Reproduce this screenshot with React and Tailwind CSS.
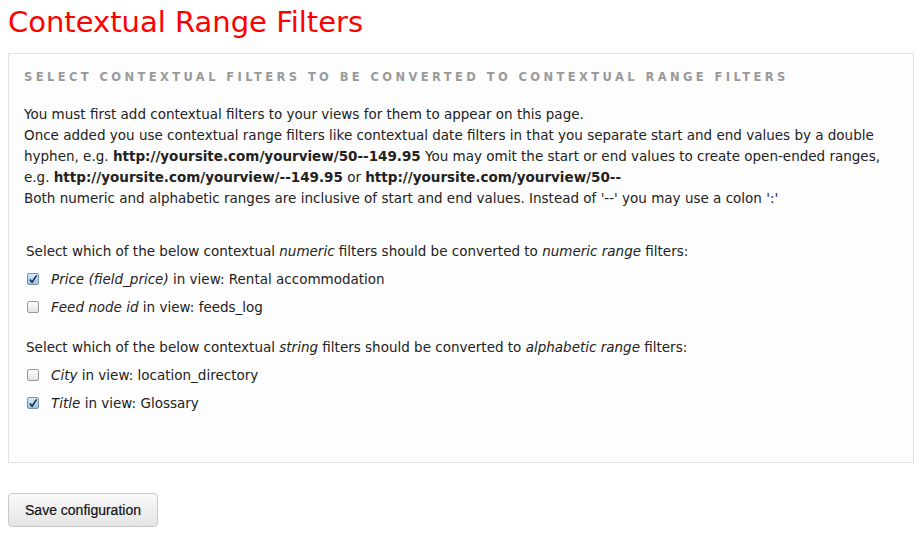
import React from 'react';

function Box({ checked }) {
  if (checked) {
    return (
      <span className="inline-flex h-[12px] w-[12px] shrink-0 items-center justify-center rounded-[2px] border border-[#7c8fa6] bg-gradient-to-b from-[#d8ecfb] to-[#8fc3ec]">
        <svg width="11" height="11" viewBox="0 0 11 11">
          <path d="M2 5.5 L4.5 8.5 L9.5 1" fill="none" stroke="#1d2a3a" strokeWidth="1.7" />
        </svg>
      </span>
    );
  }
  return (
    <span className="inline-block h-[12px] w-[12px] shrink-0 rounded-[2px] border border-[#9a9a9a] bg-gradient-to-b from-[#fdfdfd] to-[#e3e3e3]" />
  );
}

function Option({ checked, label, view }) {
  return (
    <div className="flex h-[28px] items-center gap-[12px] pl-[1px]">
      <Box checked={checked} />
      <span>
        <em>{label}</em> in view: {view}
      </span>
    </div>
  );
}

export default function App() {
  return (
    <div className="min-h-[534px] bg-white px-[8px] pt-[2px] text-[#222] [font-family:'DejaVu_Sans',sans-serif]">
      <h1 className="text-[29px] font-normal leading-[40px] text-[#ff0000]">Contextual Range Filters</h1>

      <div className="mt-[11px] h-[410px] w-[906px] border border-[#e1e1e1] bg-[#fdfdfd] px-[15px] pt-[15px] text-[13.5px] leading-[21px]">
        <div className="text-[11.5px] font-bold uppercase leading-[16px] tracking-[3.4px] text-[#9a9a9a]">
          Select contextual filters to be converted to contextual range filters
        </div>

        <div className="mt-[19px] whitespace-nowrap">
          <div>You must first add contextual filters to your views for them to appear on this page.</div>
          <div>Once added you use contextual range filters like contextual date filters in that you separate start and end values by a double</div>
          <div>
            hyphen, e.g. <b>http://yoursite.com/yourview/50--149.95</b> You may omit the start or end values to create open-ended ranges,
          </div>
          <div>
            e.g. <b>http://yoursite.com/yourview/--149.95</b> or <b>http://yoursite.com/yourview/50--</b>
          </div>
          <div>Both numeric and alphabetic ranges are inclusive of start and end values. Instead of '--' you may use a colon ':'</div>
        </div>

        <div className="mt-[29px] pl-[2px]">
          <div className="leading-[27px]">
            Select which of the below contextual <em>numeric</em> filters should be converted to <em>numeric range</em> filters:
          </div>
          <Option checked label="Price (field_price)" view="Rental accommodation" />
          <Option label="Feed node id" view="feeds_log" />

          <div className="mt-[12px] leading-[28px]">
            Select which of the below contextual <em>string</em> filters should be converted to <em>alphabetic range</em> filters:
          </div>
          <Option label="City" view="location_directory" />
          <Option checked label="Title" view="Glossary" />
        </div>
      </div>

      <button className="mt-[30px] h-[34px] w-[150px] rounded-[4px] border border-[#c8c8c8] bg-gradient-to-b from-[#fafafa] to-[#e4e4e4] text-[14px] text-[#111] [font-family:'Liberation_Sans',sans-serif] [-webkit-text-stroke:0.2px_#111]">
        Save configuration
      </button>
    </div>
  );
}
